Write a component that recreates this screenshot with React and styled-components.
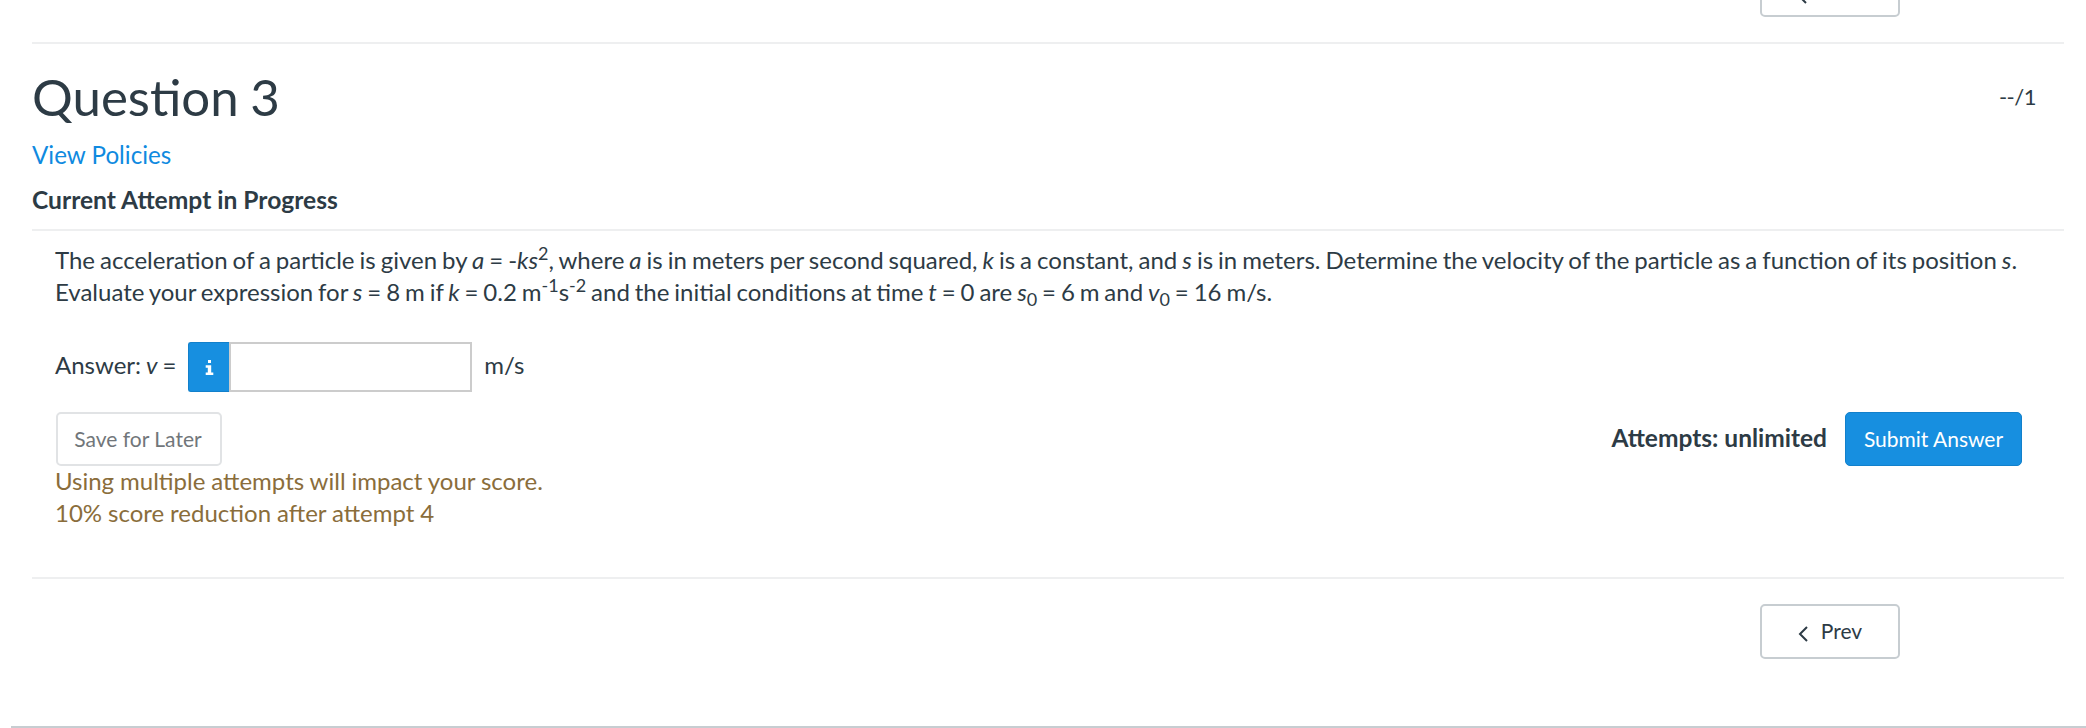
import React from "react";
import styled, { createGlobalStyle } from "styled-components";

const GlobalStyle = createGlobalStyle`
  html, body {
    margin: 0;
    background: #fff;
  }
  body {
    font-family: Lato, "Open Sans", sans-serif;
    color: #2d3b45;
    font-size: 24px;
  }
`;

function Chevron() {
  return (
    <ChevronIcon viewBox="0 0 12 18" aria-hidden="true">
      <path d="M10 2 3 9l7 7" fill="none" stroke="currentColor" strokeWidth="2" />
    </ChevronIcon>
  );
}

export default function App() {
  return (
    <>
      <GlobalStyle />
      <Frame>
        <Content>
          <TopNav>
            <CutOffButton>
              <Chevron />
            </CutOffButton>
          </TopNav>
          <Header>
            <Title>Question 3</Title>
            <Score>--/1</Score>
          </Header>
          <PolicyLink href="#">View Policies</PolicyLink>
          <AttemptStatus>Current Attempt in Progress</AttemptStatus>
          <Question>
            <Prompt>
              <PromptLine $spacing={-1.14}>
                The acceleration of a particle is given by <i>a</i> = -<i>ks</i>
                <sup>2</sup>, where <i>a</i> is in meters per second squared, <i>k</i> is a constant,
                and <i>s</i> is in meters. Determine the velocity of the particle as a function of
                its position <i>s</i>.
              </PromptLine>
              <PromptLine $spacing={-1.25}>
                Evaluate your expression for <i>s</i> = 8 m if <i>k</i> = 0.2 m<sup>-1</sup>s
                <sup>-2</sup> and the initial conditions at time <i>t</i> = 0 are <i>s</i>
                <sub>0</sub> = 6 m and <i>v</i>
                <sub>0</sub> = 16 m/s.
              </PromptLine>
            </Prompt>
            <AnswerRow>
              <AnswerText>
                Answer: <i>v</i> =
              </AnswerText>
              <AnswerField>
                <InfoButton>
                  <svg width="9" height="15" viewBox="0 0 9 15" aria-hidden="true">
                    <path
                      fill="currentColor"
                      d="M3 0h3v3H3zM.7 5.2h5.5v7.3h2.1V15H.7v-2.5h2.1V7.7H.7z"
                    />
                  </svg>
                </InfoButton>
                <AnswerInput />
              </AnswerField>
              <AnswerText>m/s</AnswerText>
            </AnswerRow>
            <ActionRow>
              <SaveButton>Save for Later</SaveButton>
              <SubmitGroup>
                <AttemptCount>Attempts: unlimited</AttemptCount>
                <SubmitButton>Submit Answer</SubmitButton>
              </SubmitGroup>
            </ActionRow>
            <Warning>
              Using multiple attempts will impact your score.
              <br />
              10% score reduction after attempt 4
            </Warning>
          </Question>
          <BottomNav>
            <PagerButton>
              <Chevron />
              Prev
            </PagerButton>
          </BottomNav>
        </Content>
      </Frame>
    </>
  );
}

const Frame = styled.div`
  box-sizing: border-box;
  height: 728px;
  margin-left: 11px;
  border-bottom: 2px solid #c7cdd1;
  overflow: hidden;
`;

const Content = styled.div`
  padding: 0 22px 0 21px;
`;

const TopNav = styled.div`
  box-sizing: border-box;
  height: 44px;
  padding-right: 164px;
  border-bottom: 2px solid #eeeff0;
  display: flex;
  justify-content: flex-end;
  align-items: flex-start;
  overflow: hidden;
`;

const PagerButton = styled.button`
  box-sizing: border-box;
  flex: none;
  width: 140px;
  height: 55px;
  background: #fff;
  border: 2px solid #c7cdd1;
  border-radius: 5px;
  color: #2d3b45;
  font: 400 21px Lato, sans-serif;
  display: flex;
  align-items: center;
  justify-content: center;
  gap: 12px;
  padding: 0 1px 2px 0;
`;

const CutOffButton = styled(PagerButton)`
  margin-top: -38px;
  justify-content: flex-start;
  padding: 6px 0 0 34px;
`;

const ChevronIcon = styled.svg`
  width: 12px;
  height: 18px;
  margin-top: 6px;
`;

const Header = styled.div`
  display: flex;
  justify-content: space-between;
  align-items: center;
  height: 62px;
  margin-top: 22px;
`;

const Title = styled.h1`
  margin: 0;
  font-size: 51px;
  font-weight: 400;
  line-height: 62px;
  word-spacing: -1.5px;
  color: #2d3b45;
`;

const Score = styled.div`
  margin-right: 28px;
  padding-bottom: 2px;
  font-size: 22px;
  letter-spacing: -0.5px;
`;

const PolicyLink = styled.a`
  display: block;
  margin-top: 11px;
  width: fit-content;
  line-height: 32px;
  font-size: 24.2px;
  color: #0f8ae0;
  text-decoration: none;
`;

const AttemptStatus = styled.div`
  margin-top: 13px;
  padding-bottom: 13px;
  line-height: 32px;
  font-size: 24.6px;
  font-weight: 700;
  border-bottom: 2px solid #eeeff0;
`;

const Question = styled.div`
  padding: 13px 0 0 23px;
  height: 348px;
  box-sizing: border-box;
  border-bottom: 2px solid #eeeff0;
`;

const Prompt = styled.div`
  line-height: 32px;
  white-space: nowrap;

  sup,
  sub {
    font-size: 0.75em;
    line-height: 0;
    position: relative;
    vertical-align: baseline;
  }
  sup {
    top: -0.5em;
  }
  sub {
    bottom: -0.25em;
  }
`;

const PromptLine = styled.div`
  word-spacing: ${(props) => props.$spacing}px;
`;

const AnswerRow = styled.div`
  display: flex;
  align-items: center;
  margin-top: 34px;
  gap: 12px;
  height: 50px;
  word-spacing: -1.25px;
`;

const AnswerText = styled.span`
  padding-bottom: 6px;
`;

const AnswerField = styled.div`
  display: flex;
  height: 50px;
`;

const InfoButton = styled.div`
  box-sizing: border-box;
  width: 41px;
  height: 50px;
  background: #178fe0;
  border: 1px solid #1280cb;
  border-right: none;
  border-radius: 3px 0 0 3px;
  color: #fff;
  display: flex;
  align-items: center;
  justify-content: center;
`;

const AnswerInput = styled.input`
  box-sizing: border-box;
  width: 243px;
  height: 50px;
  border: 2px solid #cccccc;
  background: #fff;
  outline: none;
`;

const ActionRow = styled.div`
  display: flex;
  justify-content: space-between;
  align-items: center;
  margin-top: 20px;
  padding-right: 42px;
`;

const SaveButton = styled.button`
  box-sizing: border-box;
  width: 166px;
  height: 54px;
  margin-left: 1px;
  padding: 0 2px 2px 0;
  background: #fff;
  border: 2px solid #e1e3e5;
  border-radius: 5px;
  color: #71767a;
  font: 400 21px Lato, sans-serif;
`;

const SubmitGroup = styled.div`
  display: flex;
  align-items: center;
  gap: 18px;
`;

const AttemptCount = styled.span`
  font-weight: 700;
  font-size: 24.5px;
  padding-bottom: 4px;
`;

const SubmitButton = styled.button`
  box-sizing: border-box;
  width: 177px;
  height: 54px;
  padding: 0 0 2px;
  background: #178fe0;
  border: 1px solid #1280cb;
  border-radius: 5px;
  color: #fff;
  font: 400 21px Lato, sans-serif;
`;

const Warning = styled.div`
  margin-top: -1px;
  line-height: 32px;
  word-spacing: -0.2px;
  color: #8a6d3b;
`;

const BottomNav = styled.div`
  display: flex;
  justify-content: flex-end;
  padding: 25px 164px 0 0;
`;
